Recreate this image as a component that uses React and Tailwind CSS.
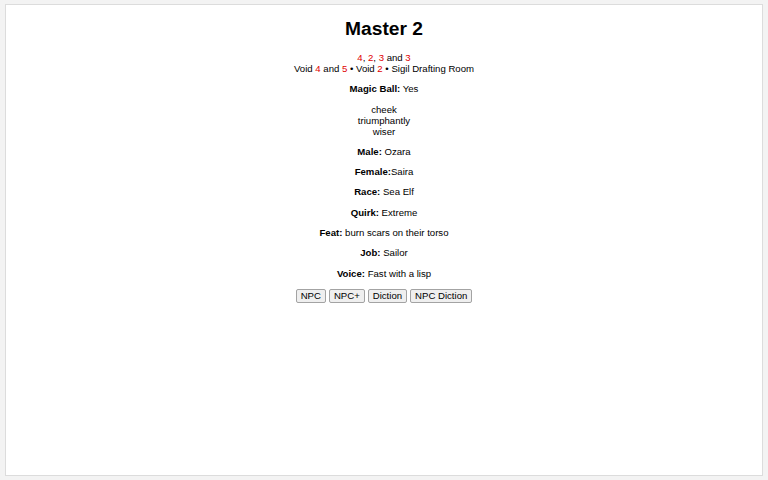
import React from 'react';

const fields = [
  { label: 'Male:', value: ' Ozara' },
  { label: 'Female:', value: 'Saira' },
  { label: 'Race:', value: ' Sea Elf' },
  { label: 'Quirk:', value: ' Extreme' },
  { label: 'Feat:', value: ' burn scars on their torso' },
  { label: 'Job:', value: ' Sailor' },
  { label: 'Voice:', value: ' Fast with a lisp' },
];

const buttons = ['NPC', 'NPC+', 'Diction', 'NPC Diction'];

function Red({ children }) {
  return <span className="text-[#e00000]">{children}</span>;
}

export default function App() {
  return (
    <div className="h-[480px] bg-[#f3f3f3] px-[5px] py-[4px] font-['Liberation_Sans',Arial,sans-serif] text-black">
      <div className="h-[472px] border border-[#dcdcdc] bg-white text-center text-[9.6px] leading-[11px]">
        <h1 className="pt-[13px] pb-[12px] text-[19.2px] font-bold leading-[22px]">Master 2</h1>

        {/* dice + location */}
        <p>
          <Red>4</Red>, <Red>2</Red>, <Red>3</Red> and <Red>3</Red>
          <br />
          Void <Red>4</Red> and <Red>5</Red> • Void <Red>2</Red> • Sigil Drafting Room
        </p>

        <p className="mt-[9.3px]">
          <b>Magic Ball:</b> Yes
        </p>

        <p className="mt-[9.3px]">
          cheek
          <br />
          triumphantly
          <br />
          wiser
        </p>

        {fields.map((f) => (
          <p key={f.label} className="mt-[9.3px]">
            <b>{f.label}</b>
            {f.value}
          </p>
        ))}

        <div className="mt-[10px] flex justify-center gap-[3px]">
          {buttons.map((b) => (
            <button
              key={b}
              className="h-[14px] border border-[#a3a3a3] bg-[#efefef] px-[4px] text-[9.6px] leading-[12px] rounded-[2px]"
            >
              {b}
            </button>
          ))}
        </div>
      </div>
    </div>
  );
}
